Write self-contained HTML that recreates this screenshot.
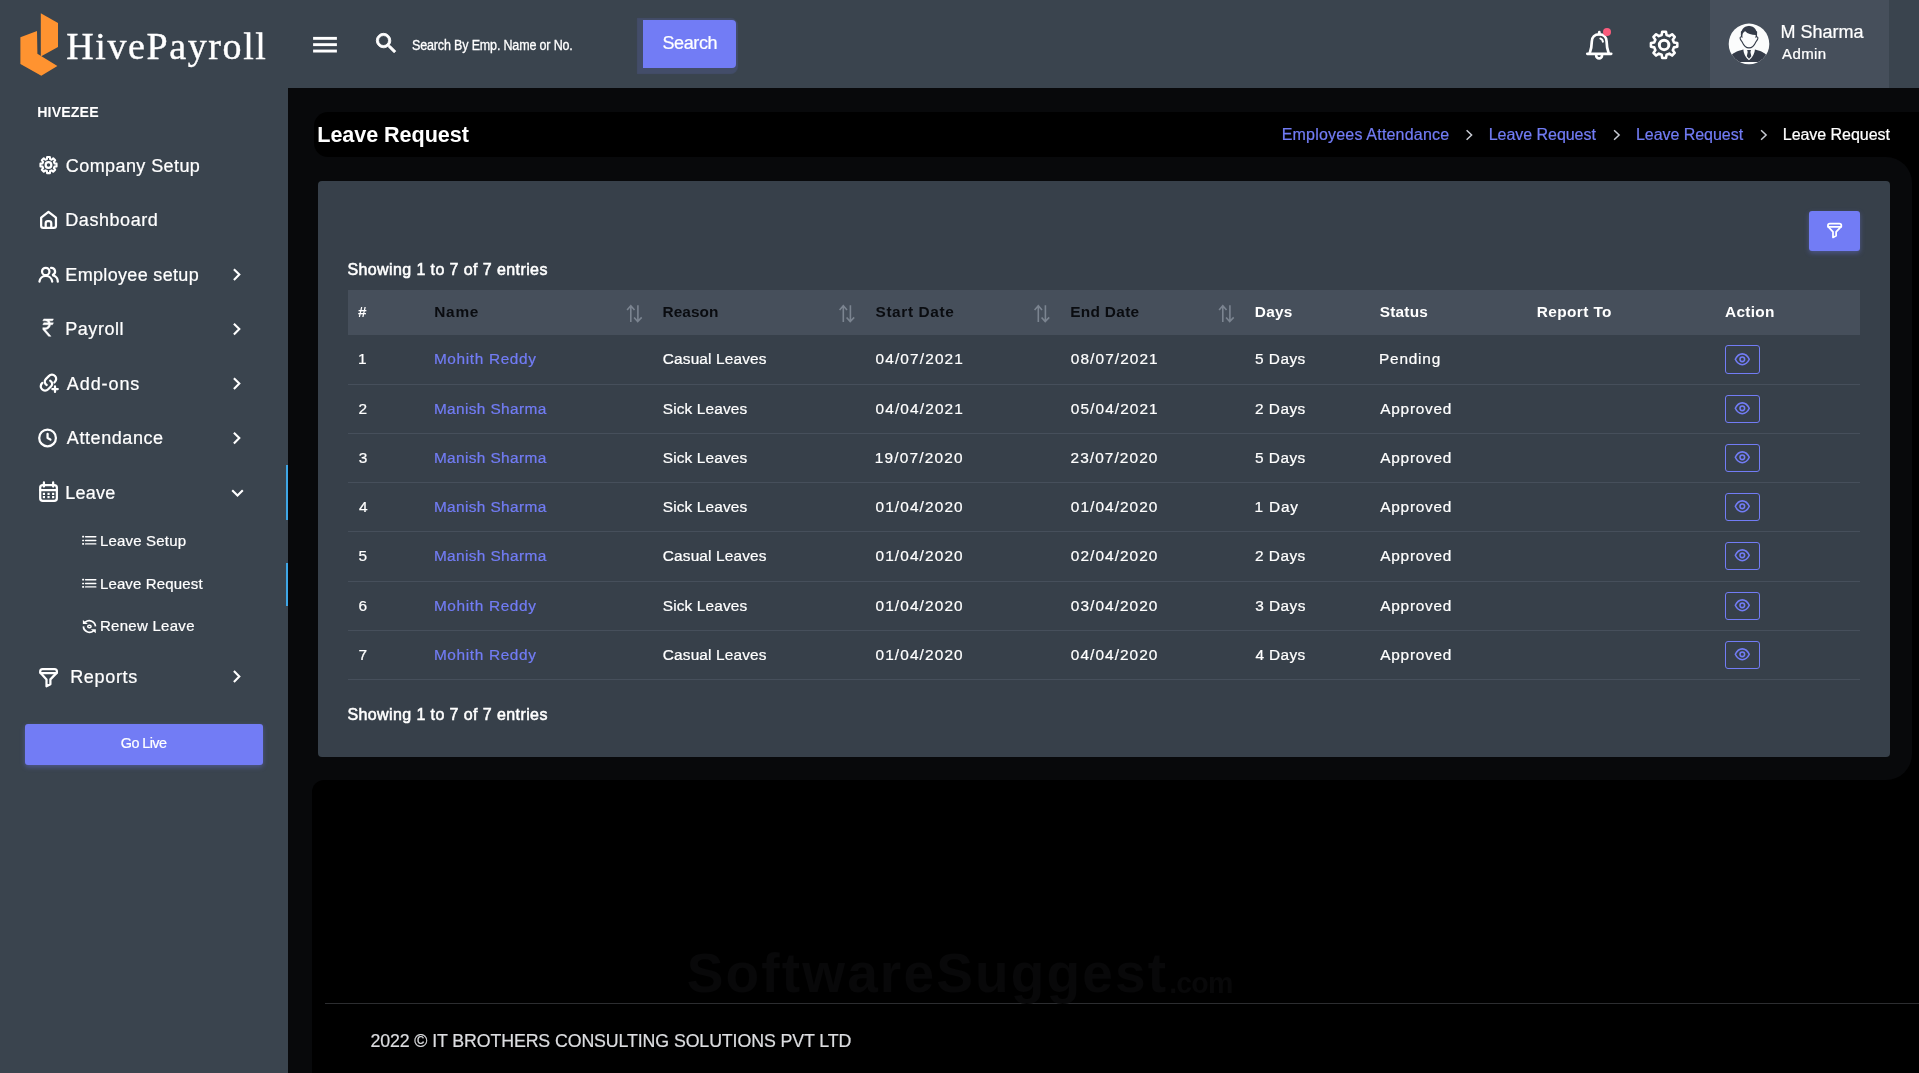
<!DOCTYPE html>
<html lang="en"><head><meta charset="utf-8"><title>HivePayroll - Leave Request</title>
<style>
*{box-sizing:border-box}
html,body{margin:0;padding:0}
body{width:1919px;height:1073px;overflow:hidden;background:#000;font-family:'Liberation Sans',sans-serif;position:relative}
#txt{position:absolute;left:0;top:0;width:1919px;height:1073px;will-change:transform}
.a{position:absolute}
.t{position:absolute;white-space:pre;line-height:1;font-weight:400}
.r{-webkit-text-stroke:0.22px currentColor}
#side{left:0;top:0;width:288px;height:1073px;background:#3a444e}
#top{left:288px;top:0;width:1631px;height:88px;background:#3a444e}
#user{left:1710px;top:0;width:179px;height:88px;background:#464f5b}
.hz{position:absolute;background:#08090b}
#strip{left:314px;top:112px;width:30px;height:45px;background:#000;border-radius:14px 0 0 14px}
#blk{left:312px;top:780px;width:40px;height:40px;background:#000;border-radius:12px 0 0 0}
#card{left:318px;top:181px;width:1572px;height:576px;background:#37404a;border-radius:4px}
#thead{left:348px;top:290px;width:1512px;height:45px;background:#464f5b}
.hl{position:absolute;left:348px;width:1512px;height:1px;background:#464f5b}
.btn{position:absolute;background:#727cf5;border-radius:3px;box-shadow:0 2px 5px 0 rgba(114,124,245,.38)}
.eye{position:absolute;left:1725px;width:35px;height:29px;border:1px solid #727cf5;border-radius:3px}
.bar{position:absolute;left:286px;width:2px;background:#3ea6e6}
svg{position:absolute;overflow:visible}
</style></head>
<body>
<div id="side" class="a"></div><div id="top" class="a"></div><div id="user" class="a"></div>
<div class="hz" style="left:288px;top:88px;width:1631px;height:24px"></div><div class="hz" style="left:288px;top:88px;width:24px;height:985px"></div><div class="hz" style="left:312px;top:112px;width:18px;height:45px"></div><div class="hz" style="left:312px;top:780px;width:14px;height:14px"></div><div class="hz" style="left:288px;top:157px;width:1624px;height:623px;border-radius:0 26px 26px 0"></div>
<div id="strip" class="a"></div><div id="blk" class="a"></div>
<div id="card" class="a"></div><div id="thead" class="a"></div>
<div class="hl" style="top:384px"></div>
<div class="hl" style="top:433px"></div>
<div class="hl" style="top:482px"></div>
<div class="hl" style="top:531px"></div>
<div class="hl" style="top:581px"></div>
<div class="hl" style="top:630px"></div>
<div class="hl" style="top:679px"></div>
<div class="a" style="left:325px;top:1003px;width:1594px;height:1px;background:#2c2d30"></div>
<div class="btn" style="left:643px;top:20px;width:93px;height:48px;border-radius:0 4px 4px 0;box-shadow:-1.6px 2.4px 1px 3.5px rgba(114,124,245,.17)"></div>
<div class="btn" style="left:25px;top:724px;width:238px;height:41px"></div>
<div class="btn" style="left:1809px;top:211px;width:51px;height:40px"></div>
<div class="bar" style="top:465px;height:55px"></div><div class="bar" style="top:563px;height:43px"></div>
<div class="eye" style="top:345px;height:29px"></div>
<svg style="left:1733.30px;top:349.75px" width="18.60" height="18.60" viewBox="0 0 24 24"><path fill="#727cf5" d="M21.92,11.6C19.9,6.91,16.1,4,12,4S4.1,6.91,2.08,11.6a1,1,0,0,0,0,.8C4.1,17.09,7.9,20,12,20s7.9-2.91,9.92-7.6A1,1,0,0,0,21.92,11.6ZM12,18c-3.17,0-6.17-2.29-7.9-6C5.83,8.29,8.83,6,12,6s6.17,2.29,7.9,6C18.17,15.71,15.17,18,12,18ZM12,8a4,4,0,1,0,4,4A4,4,0,0,0,12,8Zm0,6a2,2,0,1,1,2-2A2,2,0,0,1,12,14Z"/></svg>
<div class="eye" style="top:395px;height:28px"></div>
<svg style="left:1733.30px;top:399.25px" width="18.60" height="18.60" viewBox="0 0 24 24"><path fill="#727cf5" d="M21.92,11.6C19.9,6.91,16.1,4,12,4S4.1,6.91,2.08,11.6a1,1,0,0,0,0,.8C4.1,17.09,7.9,20,12,20s7.9-2.91,9.92-7.6A1,1,0,0,0,21.92,11.6ZM12,18c-3.17,0-6.17-2.29-7.9-6C5.83,8.29,8.83,6,12,6s6.17,2.29,7.9,6C18.17,15.71,15.17,18,12,18ZM12,8a4,4,0,1,0,4,4A4,4,0,0,0,12,8Zm0,6a2,2,0,1,1,2-2A2,2,0,0,1,12,14Z"/></svg>
<div class="eye" style="top:444px;height:28px"></div>
<svg style="left:1733.30px;top:448.25px" width="18.60" height="18.60" viewBox="0 0 24 24"><path fill="#727cf5" d="M21.92,11.6C19.9,6.91,16.1,4,12,4S4.1,6.91,2.08,11.6a1,1,0,0,0,0,.8C4.1,17.09,7.9,20,12,20s7.9-2.91,9.92-7.6A1,1,0,0,0,21.92,11.6ZM12,18c-3.17,0-6.17-2.29-7.9-6C5.83,8.29,8.83,6,12,6s6.17,2.29,7.9,6C18.17,15.71,15.17,18,12,18ZM12,8a4,4,0,1,0,4,4A4,4,0,0,0,12,8Zm0,6a2,2,0,1,1,2-2A2,2,0,0,1,12,14Z"/></svg>
<div class="eye" style="top:493px;height:28px"></div>
<svg style="left:1733.30px;top:497.25px" width="18.60" height="18.60" viewBox="0 0 24 24"><path fill="#727cf5" d="M21.92,11.6C19.9,6.91,16.1,4,12,4S4.1,6.91,2.08,11.6a1,1,0,0,0,0,.8C4.1,17.09,7.9,20,12,20s7.9-2.91,9.92-7.6A1,1,0,0,0,21.92,11.6ZM12,18c-3.17,0-6.17-2.29-7.9-6C5.83,8.29,8.83,6,12,6s6.17,2.29,7.9,6C18.17,15.71,15.17,18,12,18ZM12,8a4,4,0,1,0,4,4A4,4,0,0,0,12,8Zm0,6a2,2,0,1,1,2-2A2,2,0,0,1,12,14Z"/></svg>
<div class="eye" style="top:542px;height:28px"></div>
<svg style="left:1733.30px;top:546.25px" width="18.60" height="18.60" viewBox="0 0 24 24"><path fill="#727cf5" d="M21.92,11.6C19.9,6.91,16.1,4,12,4S4.1,6.91,2.08,11.6a1,1,0,0,0,0,.8C4.1,17.09,7.9,20,12,20s7.9-2.91,9.92-7.6A1,1,0,0,0,21.92,11.6ZM12,18c-3.17,0-6.17-2.29-7.9-6C5.83,8.29,8.83,6,12,6s6.17,2.29,7.9,6C18.17,15.71,15.17,18,12,18ZM12,8a4,4,0,1,0,4,4A4,4,0,0,0,12,8Zm0,6a2,2,0,1,1,2-2A2,2,0,0,1,12,14Z"/></svg>
<div class="eye" style="top:592px;height:28px"></div>
<svg style="left:1733.30px;top:596.25px" width="18.60" height="18.60" viewBox="0 0 24 24"><path fill="#727cf5" d="M21.92,11.6C19.9,6.91,16.1,4,12,4S4.1,6.91,2.08,11.6a1,1,0,0,0,0,.8C4.1,17.09,7.9,20,12,20s7.9-2.91,9.92-7.6A1,1,0,0,0,21.92,11.6ZM12,18c-3.17,0-6.17-2.29-7.9-6C5.83,8.29,8.83,6,12,6s6.17,2.29,7.9,6C18.17,15.71,15.17,18,12,18ZM12,8a4,4,0,1,0,4,4A4,4,0,0,0,12,8Zm0,6a2,2,0,1,1,2-2A2,2,0,0,1,12,14Z"/></svg>
<div class="eye" style="top:641px;height:28px"></div>
<svg style="left:1733.30px;top:645.25px" width="18.60" height="18.60" viewBox="0 0 24 24"><path fill="#727cf5" d="M21.92,11.6C19.9,6.91,16.1,4,12,4S4.1,6.91,2.08,11.6a1,1,0,0,0,0,.8C4.1,17.09,7.9,20,12,20s7.9-2.91,9.92-7.6A1,1,0,0,0,21.92,11.6ZM12,18c-3.17,0-6.17-2.29-7.9-6C5.83,8.29,8.83,6,12,6s6.17,2.29,7.9,6C18.17,15.71,15.17,18,12,18ZM12,8a4,4,0,1,0,4,4A4,4,0,0,0,12,8Zm0,6a2,2,0,1,1,2-2A2,2,0,0,1,12,14Z"/></svg>
<svg style="left:0;top:0" width="1919" height="400" viewBox="0 0 1919 400" fill="none" stroke="#7b8490" stroke-width="1.6"><path d="M630.8,322 V306 M627.1,310 L630.8,305.8 L634.5,310"/><path d="M637.9,305.2 V321 M634.1,317.4 L637.7,321.6 L641.7,317.4"/></svg>
<svg style="left:0;top:0" width="1919" height="400" viewBox="0 0 1919 400" fill="none" stroke="#7b8490" stroke-width="1.6"><path d="M843.3,322 V306 M839.6,310 L843.3,305.8 L847.0,310"/><path d="M850.4,305.2 V321 M846.6,317.4 L850.2,321.6 L854.2,317.4"/></svg>
<svg style="left:0;top:0" width="1919" height="400" viewBox="0 0 1919 400" fill="none" stroke="#7b8490" stroke-width="1.6"><path d="M1038.3,322 V306 M1034.6,310 L1038.3,305.8 L1042.0,310"/><path d="M1045.4,305.2 V321 M1041.6,317.4 L1045.2,321.6 L1049.2,317.4"/></svg>
<svg style="left:0;top:0" width="1919" height="400" viewBox="0 0 1919 400" fill="none" stroke="#7b8490" stroke-width="1.6"><path d="M1222.8,322 V306 M1219.1,310 L1222.8,305.8 L1226.5,310"/><path d="M1229.9,305.2 V321 M1226.1,317.4 L1229.7,321.6 L1233.7,317.4"/></svg>
<svg style="left:0px;top:0px" width="80" height="90" viewBox="0 0 80 90" ><polygon fill="#ff9330" points="40.8,13.3 58,22.9 58,47.1 40.8,56.5"/><polygon fill="#ff9330" points="20.4,37.2 37,30.9 37.4,53.8 57.4,66 41.3,75.7 20.4,63.9"/></svg>
<svg style="left:305px;top:25px" width="40" height="40" viewBox="0 0 40 40" ><rect x="8.1" y="11.9" width="23.8" height="2.9" fill="#fff"/><rect x="8.1" y="18.2" width="23.8" height="2.9" fill="#fff"/><rect x="8.1" y="24.6" width="23.8" height="2.9" fill="#fff"/></svg>
<svg style="left:373.15px;top:30.35px" width="26.64" height="26.64" viewBox="0 0 24 24"><path fill="#fff" stroke="#fff" stroke-width=".8" stroke-linejoin="round" d="M9.5,3A6.5,6.5 0 0,1 16,9.5C16,11.11 15.41,12.59 14.44,13.73L14.71,14H15.5L20.5,19L19,20.5L14,15.5V14.71L13.73,14.44C12.59,15.41 11.11,16 9.5,16A6.5,6.5 0 0,1 3,9.5A6.5,6.5 0 0,1 9.5,3M9.5,5C7,5 5,7 5,9.5C5,12 7,14 9.5,14C12,14 14,12 14,9.5C14,7 12,5 9.5,5Z"/></svg>
<svg style="left:1575px;top:20px" width="120" height="50" viewBox="0 0 120 50" fill="none" stroke="#fff" stroke-linecap="round" stroke-linejoin="round" stroke-width="2.7"><path d="M14.6,33.6 C16.3,29 16.8,25 16.8,21.6 C16.8,17 19.9,14.4 24.2,14.4 C28.5,14.4 31.6,17 31.6,21.6 C31.6,25 32.1,29 33.8,33.6" /><path d="M12.3,33.8 H36.2"/><path d="M24.3,12.2 V14"/><path d="M21.2,35.4 A2.9,2.9 0 0 0 27,35.4" /><path d="M25.4,18.5 A3.6,3.6 0 0 1 27.9,21.6" stroke-width="2.1"/></svg>
<div class="a" style="left:1602.9px;top:27.9px;width:8.2px;height:8.2px;border-radius:50%;background:#fa5c7c"></div>
<svg style="left:1575px;top:20px" width="120" height="50" viewBox="0 0 120 50" fill="none" stroke="#fff" stroke-linecap="round" stroke-linejoin="round" stroke-width="2.6"><path d="M86.64,15.00 L87.23,11.73 L90.97,11.73 L91.56,15.00 L94.36,16.16 L97.09,14.26 L99.74,16.91 L97.84,19.64 L99.00,22.44 L102.27,23.03 L102.27,26.77 L99.00,27.36 L97.84,30.16 L99.74,32.89 L97.09,35.54 L94.36,33.64 L91.56,34.80 L90.97,38.07 L87.23,38.07 L86.64,34.80 L83.84,33.64 L81.11,35.54 L78.46,32.89 L80.36,30.16 L79.20,27.36 L75.93,26.77 L75.93,23.03 L79.20,22.44 L80.36,19.64 L78.46,16.91 L81.11,14.26 L83.84,16.16Z"/><circle cx="89.1" cy="24.9" r="4.75" stroke-width="3"/></svg>
<svg style="left:1720px;top:15px" width="60" height="60" viewBox="0 0 60 60" ><defs><clipPath id="avc"><circle cx="29" cy="28.9" r="20.3"/></clipPath></defs><circle cx="29" cy="28.9" r="20.3" fill="#fbfcfc"/><g clip-path="url(#avc)"><path fill="#353c49" d="M11,47 V41 C13,37.6 19,35.6 23.4,34.6 C23.6,39 26,43 29,45.2 C32,43 34.6,39 34.9,34.6 C39.5,35.6 45,37.6 47,41 V47 Z"/><path fill="#353c49" d="M27.1,35 H31 L30.4,37 L31.3,41.3 L29,43.8 L26.8,41.3 L27.7,37 Z"/></g><path fill="#fbfcfc" stroke="#353c49" stroke-width="1.1" d="M21.6,21.8 C20.4,21.4 19.8,22.6 20.3,24 C20.9,25.6 21.8,26.4 22.3,27.2 C23.6,30.2 25.6,32.9 29,32.9 C32.4,32.9 34.4,30.2 35.7,27.2 C36.2,26.4 37.1,25.6 37.7,24 C38.2,22.6 37.6,21.4 36.4,21.8 L36.6,17 L29,11.5 L21.4,17 Z"/><path fill="#353c49" d="M22.6,23.2 C22,20.5 22.4,17.6 25.2,16.2 C27.6,19 31.6,19.7 35.8,19.9 L35.4,23.2 C36,22.6 36.6,22 37,21.6 C37.6,15.5 34.6,10.9 29,10.9 C23.4,10.9 20.4,15.5 21,21.6 C21.5,22 22,22.6 22.6,23.2 Z"/></svg>
<svg style="left:34px;top:150px" width="30" height="30" viewBox="0 0 30 30" fill="none" stroke="#fff" stroke-linecap="round" stroke-linejoin="round" stroke-width="2.05"><path d="M12.91,9.06 L13.09,6.97 L15.91,6.97 L16.09,9.06 L17.61,9.69 L19.22,8.34 L21.21,10.33 L19.86,11.94 L20.49,13.46 L22.58,13.64 L22.58,16.46 L20.49,16.64 L19.86,18.16 L21.21,19.77 L19.22,21.76 L17.61,20.41 L16.09,21.04 L15.91,23.13 L13.09,23.13 L12.91,21.04 L11.39,20.41 L9.78,21.76 L7.79,19.77 L9.14,18.16 L8.51,16.64 L6.42,16.46 L6.42,13.64 L8.51,13.46 L9.14,11.94 L7.79,10.33 L9.78,8.34 L11.39,9.69Z"/><circle cx="14.5" cy="15.05" r="2.85" stroke-width="2.2"/></svg>
<svg style="left:34px;top:205px" width="30" height="30" viewBox="0 0 30 30" fill="none" stroke="#fff" stroke-linecap="round" stroke-linejoin="round" stroke-width="2.25"><path d="M7.15,12.6 L14.45,6.95 L21.95,12.6 V20.7 Q21.95,22.9 19.75,22.9 H9.35 Q7.15,22.9 7.15,20.7 Z"/><path d="M11.7,22.6 V18.3 Q11.7,16.1 13.9,16.1 H15.05 Q17.25,16.1 17.25,18.3 V22.6"/></svg>
<svg style="left:34px;top:260px" width="30" height="30" viewBox="0 0 30 30" fill="none" stroke="#fff" stroke-linecap="round" stroke-linejoin="round" stroke-width="2.25"><circle cx="11.74" cy="11.46" r="3.7"/><path d="M5.45,21.7 A6.4,6.4 0 0 1 18.2,21.7"/><path d="M17.05,7.8 A3.7,3.7 0 0 1 18.9,14.85"/><path d="M19.3,15.55 A6.4,6.4 0 0 1 23.8,21.7"/></svg>
<svg style="left:36.40px;top:316.20px" width="23.28" height="23.28" viewBox="0 0 24 24"><path fill="#fff" stroke="#fff" stroke-width=".45" d="M8,3H18L17,5H13.74C14.22,5.58 14.58,6.26 14.79,7H18L17,9H15C14.75,11.57 12.74,13.63 10.2,13.96V14H9.5L15.5,21H13L7,14V12H9.5C11.26,12 12.72,10.7 12.96,9H7L8,7H12.66C12.1,5.82 10.9,5 9.5,5H7L8,3Z"/></svg>
<svg style="left:34px;top:369px" width="30" height="30" viewBox="0 0 30 30" fill="none" stroke="#fff" stroke-linecap="round" stroke-linejoin="round" stroke-width="2.25"><path d="M20.4,13.5 C22.6,11.6 22.7,8.7 21,7 C19.2,5.2 16.6,5.3 14.8,7.1 L11.8,10.1 C10,11.9 10.6,14.6 12.7,16"/><path d="M8.4,13.9 C6.2,15.8 6.3,18.6 8,20.3 C9.8,22.1 12.4,22 14.2,20.2 L17.2,17.2 C19,15.4 18.2,12.9 16.2,11.7"/><path d="M18.3,20.1 H23.8 M21,17.4 V22.9"/></svg>
<svg style="left:34px;top:423px" width="30" height="30" viewBox="0 0 30 30" fill="none" stroke="#fff" stroke-linecap="round" stroke-linejoin="round" stroke-width="2.25"><circle cx="13.56" cy="14.96" r="8.35"/><path d="M13.56,10.9 V15.1 L16.4,16.6"/></svg>
<svg style="left:34px;top:477px" width="30" height="30" viewBox="0 0 30 30" fill="none" stroke="#fff" stroke-linecap="round" stroke-linejoin="round" stroke-width="2.25"><rect x="6.2" y="8" width="16.65" height="15.85" rx="2.6"/><path d="M6.2,13 H22.85 M9.92,5.4 V9.6 M19.15,5.4 V9.6"/><rect x="8.82" y="15.80" width="2.2" height="2.2" fill="#fff" stroke="none"/><rect x="8.82" y="19.00" width="2.2" height="2.2" fill="#fff" stroke="none"/><rect x="13.44" y="15.80" width="2.2" height="2.2" fill="#fff" stroke="none"/><rect x="13.44" y="19.00" width="2.2" height="2.2" fill="#fff" stroke="none"/><rect x="18.05" y="15.80" width="2.2" height="2.2" fill="#fff" stroke="none"/><rect x="18.05" y="19.00" width="2.2" height="2.2" fill="#fff" stroke="none"/></svg>
<svg style="left:34px;top:662px" width="30" height="30" viewBox="0 0 30 30" fill="none" stroke="#fff" stroke-linecap="round" stroke-linejoin="round" stroke-width="2.25"><path d="M8.6,7 H20.5 Q22.9,7 22.9,9.4 V10.6 L16.4,17.4 V22.3 L12.5,24.3 V17.4 L6.2,10.6 V9.4 Q6.2,7 8.6,7 Z"/><path d="M6.6,11.2 H22.5"/></svg>
<svg style="left:1822.86px;top:218.08px" width="24.0" height="24.0" viewBox="0 0 30 30" fill="none" stroke="#fff" stroke-linecap="round" stroke-linejoin="round" stroke-width="2.2"><path d="M8.6,7 H20.5 Q22.9,7 22.9,9.4 V10.6 L16.4,17.4 V22.3 L12.5,24.3 V17.4 L6.2,10.6 V9.4 Q6.2,7 8.6,7 Z"/><path d="M6.6,11.2 H22.5"/></svg>
<svg style="left:78px;top:530px" width="24" height="24" viewBox="0 0 24 24" ><rect x="6.9" y="6.02" width="11.6" height="1.36" rx=".68" fill="#fff"/><rect x="4.1" y="5.85" width="2" height="1.7" rx=".5" fill="#fff"/><rect x="6.9" y="9.82" width="11.6" height="1.36" rx=".68" fill="#fff"/><rect x="4.1" y="9.65" width="2" height="1.7" rx=".5" fill="#fff"/><rect x="6.9" y="13.22" width="11.6" height="1.36" rx=".68" fill="#fff"/><rect x="4.1" y="13.05" width="2" height="1.7" rx=".5" fill="#fff"/></svg>
<svg style="left:78px;top:573.1px" width="24" height="24" viewBox="0 0 24 24" ><rect x="6.9" y="6.02" width="11.6" height="1.36" rx=".68" fill="#fff"/><rect x="4.1" y="5.85" width="2" height="1.7" rx=".5" fill="#fff"/><rect x="6.9" y="9.82" width="11.6" height="1.36" rx=".68" fill="#fff"/><rect x="4.1" y="9.65" width="2" height="1.7" rx=".5" fill="#fff"/><rect x="6.9" y="13.22" width="11.6" height="1.36" rx=".68" fill="#fff"/><rect x="4.1" y="13.05" width="2" height="1.7" rx=".5" fill="#fff"/></svg>
<svg style="left:78px;top:615px" width="24" height="24" viewBox="0 0 24 24" ><path d="M17.5,11.4 A6.2,6.2 0 0 0 7.3,7.2" fill="none" stroke="#fff" stroke-width="1.7"/><path d="M5.4,11.4 A6.2,6.2 0 0 0 15.5,15.9" fill="none" stroke="#fff" stroke-width="1.7"/><path d="M4.9,5 V8.9 H9.9 Z" fill="#fff"/><path d="M17.8,18.3 V14.3 H12.8 Z" fill="#fff"/><ellipse cx="11.4" cy="11.6" rx="1.7" ry="1.25" fill="none" stroke="#fff" stroke-width="1.5"/></svg>
<svg style="left:0;top:0" width="288" height="700" viewBox="0 0 288 700" fill="none" stroke="#fff" stroke-width="2.1"><path d="M233.9,269.2 L239.3,274.6 L233.9,280.0"/></svg>
<svg style="left:0;top:0" width="288" height="700" viewBox="0 0 288 700" fill="none" stroke="#fff" stroke-width="2.1"><path d="M233.9,323.7 L239.3,329.1 L233.9,334.5"/></svg>
<svg style="left:0;top:0" width="288" height="700" viewBox="0 0 288 700" fill="none" stroke="#fff" stroke-width="2.1"><path d="M233.9,378.2 L239.3,383.6 L233.9,389.0"/></svg>
<svg style="left:0;top:0" width="288" height="700" viewBox="0 0 288 700" fill="none" stroke="#fff" stroke-width="2.1"><path d="M233.9,432.7 L239.3,438.1 L233.9,443.5"/></svg>
<svg style="left:0;top:0" width="288" height="700" viewBox="0 0 288 700" fill="none" stroke="#fff" stroke-width="2.1"><path d="M233.9,671.1 L239.3,676.5 L233.9,681.9"/></svg>
<svg style="left:0;top:0" width="288" height="700" viewBox="0 0 288 700" fill="none" stroke="#fff" stroke-width="2.1"><path d="M232.2,490.2 L237.5,495.6 L242.8,490.2"/></svg>
<svg style="left:0;top:0" width="1919" height="200" viewBox="0 0 1919 200" fill="none" stroke="#c9ccd4" stroke-width="1.5"><path d="M1466.6,130.3 L1471.6,135 L1466.6,139.7"/></svg>
<svg style="left:0;top:0" width="1919" height="200" viewBox="0 0 1919 200" fill="none" stroke="#c9ccd4" stroke-width="1.5"><path d="M1614.1,130.3 L1619.1,135 L1614.1,139.7"/></svg>
<svg style="left:0;top:0" width="1919" height="200" viewBox="0 0 1919 200" fill="none" stroke="#c9ccd4" stroke-width="1.5"><path d="M1761.1,130.3 L1766.1,135 L1761.1,139.7"/></svg>
<div id="txt">
<span class="t" style="left:66.3px;top:26.7px;font-size:38px;color:#fff;font-family:'Liberation Serif', serif;letter-spacing:1.6px;-webkit-text-stroke:0.4px #fff;">HivePayroll</span>
<span class="t" style="left:412.4px;top:38.1px;font-size:14px;color:#fff;letter-spacing:-0.2px;-webkit-text-stroke:0.3px #fff;transform:scaleX(0.8958);transform-origin:0.75px 50%;">Search By Emp. Name or No.</span>
<span class="t r" style="left:662.5px;top:34.0px;font-size:18px;color:#fff;letter-spacing:-0.39px;">Search</span>
<span class="t r" style="left:1780.6px;top:22.7px;font-size:18px;color:#fff;">M Sharma</span>
<span class="t r" style="left:1782.1px;top:46.1px;font-size:15px;color:#fff;letter-spacing:0.375px;">Admin</span>
<span class="t" style="left:37.2px;top:104.9px;font-size:14.2px;color:#fff;font-weight:700;letter-spacing:0.125px;">HIVEZEE</span>
<span class="t r" style="left:65.8px;top:156.6px;font-size:18px;color:#fff;letter-spacing:0.412px;">Company Setup</span>
<span class="t r" style="left:65.3px;top:210.8px;font-size:18px;color:#fff;letter-spacing:0.55px;">Dashboard</span>
<span class="t r" style="left:65.3px;top:265.7px;font-size:18px;color:#fff;letter-spacing:0.335px;">Employee setup</span>
<span class="t r" style="left:65.3px;top:319.5px;font-size:18px;color:#fff;letter-spacing:0.525px;">Payroll</span>
<span class="t r" style="left:66.8px;top:374.5px;font-size:18px;color:#fff;letter-spacing:0.917px;">Add-ons</span>
<span class="t r" style="left:66.8px;top:428.7px;font-size:18px;color:#fff;letter-spacing:0.583px;">Attendance</span>
<span class="t r" style="left:65.3px;top:483.5px;font-size:18px;color:#fff;letter-spacing:0.238px;">Leave</span>
<span class="t r" style="left:70.2px;top:667.7px;font-size:18px;color:#fff;letter-spacing:0.667px;">Reports</span>
<span class="t r" style="left:99.9px;top:532.8px;font-size:15px;color:#fff;letter-spacing:0.195px;">Leave Setup</span>
<span class="t r" style="left:99.9px;top:575.9px;font-size:15px;color:#fff;letter-spacing:0.15px;">Leave Request</span>
<span class="t r" style="left:99.9px;top:618.4px;font-size:15px;color:#fff;letter-spacing:0.285px;">Renew Leave</span>
<span class="t r" style="left:120.8px;top:736.3px;font-size:14.4px;color:#fff;letter-spacing:-0.575px;">Go Live</span>
<span class="t" style="left:317.3px;top:123.5px;font-size:21.6px;color:#fff;font-weight:700;letter-spacing:-0.071px;">Leave Request</span>
<span class="t r" style="left:1281.7px;top:126.5px;font-size:16px;color:#727cf5;letter-spacing:0.197px;">Employees Attendance</span>
<span class="t r" style="left:1488.7px;top:126.5px;font-size:16px;color:#727cf5;letter-spacing:-0.038px;">Leave Request</span>
<span class="t r" style="left:1636.0px;top:126.5px;font-size:16px;color:#727cf5;letter-spacing:-0.046px;">Leave Request</span>
<span class="t r" style="left:1782.8px;top:126.5px;font-size:16px;color:#fff;letter-spacing:-0.046px;">Leave Request</span>
<span class="t" style="left:347.4px;top:261.6px;font-size:16px;color:#fff;letter-spacing:0.406px;-webkit-text-stroke:0.55px #fff;">Showing 1 to 7 of 7 entries</span>
<span class="t" style="left:347.4px;top:706.8px;font-size:16px;color:#fff;letter-spacing:0.406px;-webkit-text-stroke:0.55px #fff;">Showing 1 to 7 of 7 entries</span>
<span class="t" style="left:358.1px;top:304.2px;font-size:15.4px;color:#fff;font-weight:700;">#</span>
<span class="t" style="left:434.2px;top:304.2px;font-size:15.4px;color:#0a0c10;font-weight:700;letter-spacing:0.767px;">Name</span>
<span class="t" style="left:662.5px;top:304.2px;font-size:15.4px;color:#0a0c10;font-weight:700;letter-spacing:0.05px;">Reason</span>
<span class="t" style="left:875.5px;top:304.2px;font-size:15.4px;color:#0a0c10;font-weight:700;letter-spacing:0.617px;">Start Date</span>
<span class="t" style="left:1070.3px;top:304.2px;font-size:15.4px;color:#0a0c10;font-weight:700;letter-spacing:0.307px;">End Date</span>
<span class="t" style="left:1254.8px;top:304.2px;font-size:15.4px;color:#fff;font-weight:700;letter-spacing:0.25px;">Days</span>
<span class="t" style="left:1379.8px;top:304.2px;font-size:15.4px;color:#fff;font-weight:700;letter-spacing:0.2px;">Status</span>
<span class="t" style="left:1536.7px;top:304.2px;font-size:15.4px;color:#fff;font-weight:700;letter-spacing:0.412px;">Report To</span>
<span class="t" style="left:1725.1px;top:304.2px;font-size:15.4px;color:#fff;font-weight:700;letter-spacing:0.28px;">Action</span>
<span class="t r" style="left:357.9px;top:351.3px;font-size:15.4px;color:#fff;">1</span>
<span class="t r" style="left:433.9px;top:351.3px;font-size:15.4px;color:#727cf5;letter-spacing:0.645px;">Mohith Reddy</span>
<span class="t r" style="left:662.8px;top:351.3px;font-size:15.4px;color:#fff;letter-spacing:0.158px;">Casual Leaves</span>
<span class="t r" style="left:875.5px;top:351.3px;font-size:15.4px;color:#fff;letter-spacing:1.15px;">04/07/2021</span>
<span class="t r" style="left:1070.8px;top:351.3px;font-size:15.4px;color:#fff;letter-spacing:1.094px;">08/07/2021</span>
<span class="t r" style="left:1255.0px;top:351.3px;font-size:15.4px;color:#fff;letter-spacing:0.48px;">5 Days</span>
<span class="t r" style="left:1379.0px;top:351.3px;font-size:15.4px;color:#fff;letter-spacing:0.792px;">Pending</span>
<span class="t r" style="left:358.4px;top:400.7px;font-size:15.4px;color:#fff;">2</span>
<span class="t r" style="left:433.9px;top:400.7px;font-size:15.4px;color:#727cf5;letter-spacing:0.383px;">Manish Sharma</span>
<span class="t r" style="left:662.8px;top:400.7px;font-size:15.4px;color:#fff;letter-spacing:0.145px;">Sick Leaves</span>
<span class="t r" style="left:875.5px;top:400.7px;font-size:15.4px;color:#fff;letter-spacing:1.15px;">04/04/2021</span>
<span class="t r" style="left:1070.8px;top:400.7px;font-size:15.4px;color:#fff;letter-spacing:1.094px;">05/04/2021</span>
<span class="t r" style="left:1255.0px;top:400.7px;font-size:15.4px;color:#fff;letter-spacing:0.48px;">2 Days</span>
<span class="t r" style="left:1380.3px;top:400.7px;font-size:15.4px;color:#fff;letter-spacing:0.743px;">Approved</span>
<span class="t r" style="left:358.7px;top:449.8px;font-size:15.4px;color:#fff;">3</span>
<span class="t r" style="left:433.9px;top:449.8px;font-size:15.4px;color:#727cf5;letter-spacing:0.383px;">Manish Sharma</span>
<span class="t r" style="left:662.8px;top:449.8px;font-size:15.4px;color:#fff;letter-spacing:0.145px;">Sick Leaves</span>
<span class="t r" style="left:874.8px;top:449.8px;font-size:15.4px;color:#fff;letter-spacing:1.206px;">19/07/2020</span>
<span class="t r" style="left:1070.5px;top:449.8px;font-size:15.4px;color:#fff;letter-spacing:1.094px;">23/07/2020</span>
<span class="t r" style="left:1255.0px;top:449.8px;font-size:15.4px;color:#fff;letter-spacing:0.48px;">5 Days</span>
<span class="t r" style="left:1380.3px;top:449.8px;font-size:15.4px;color:#fff;letter-spacing:0.743px;">Approved</span>
<span class="t r" style="left:358.9px;top:498.7px;font-size:15.4px;color:#fff;">4</span>
<span class="t r" style="left:433.9px;top:498.7px;font-size:15.4px;color:#727cf5;letter-spacing:0.383px;">Manish Sharma</span>
<span class="t r" style="left:662.8px;top:498.7px;font-size:15.4px;color:#fff;letter-spacing:0.145px;">Sick Leaves</span>
<span class="t r" style="left:875.5px;top:498.7px;font-size:15.4px;color:#fff;letter-spacing:1.122px;">01/04/2020</span>
<span class="t r" style="left:1070.8px;top:498.7px;font-size:15.4px;color:#fff;letter-spacing:1.067px;">01/04/2020</span>
<span class="t r" style="left:1254.5px;top:498.7px;font-size:15.4px;color:#fff;letter-spacing:0.812px;">1 Day</span>
<span class="t r" style="left:1380.3px;top:498.7px;font-size:15.4px;color:#fff;letter-spacing:0.743px;">Approved</span>
<span class="t r" style="left:358.4px;top:548.2px;font-size:15.4px;color:#fff;">5</span>
<span class="t r" style="left:433.9px;top:548.2px;font-size:15.4px;color:#727cf5;letter-spacing:0.383px;">Manish Sharma</span>
<span class="t r" style="left:662.8px;top:548.2px;font-size:15.4px;color:#fff;letter-spacing:0.158px;">Casual Leaves</span>
<span class="t r" style="left:875.5px;top:548.2px;font-size:15.4px;color:#fff;letter-spacing:1.122px;">01/04/2020</span>
<span class="t r" style="left:1070.8px;top:548.2px;font-size:15.4px;color:#fff;letter-spacing:1.067px;">02/04/2020</span>
<span class="t r" style="left:1255.0px;top:548.2px;font-size:15.4px;color:#fff;letter-spacing:0.48px;">2 Days</span>
<span class="t r" style="left:1380.3px;top:548.2px;font-size:15.4px;color:#fff;letter-spacing:0.743px;">Approved</span>
<span class="t r" style="left:358.4px;top:597.6px;font-size:15.4px;color:#fff;">6</span>
<span class="t r" style="left:433.9px;top:597.6px;font-size:15.4px;color:#727cf5;letter-spacing:0.645px;">Mohith Reddy</span>
<span class="t r" style="left:662.8px;top:597.6px;font-size:15.4px;color:#fff;letter-spacing:0.145px;">Sick Leaves</span>
<span class="t r" style="left:875.5px;top:597.6px;font-size:15.4px;color:#fff;letter-spacing:1.122px;">01/04/2020</span>
<span class="t r" style="left:1070.8px;top:597.6px;font-size:15.4px;color:#fff;letter-spacing:1.067px;">03/04/2020</span>
<span class="t r" style="left:1255.3px;top:597.6px;font-size:15.4px;color:#fff;letter-spacing:0.43px;">3 Days</span>
<span class="t r" style="left:1380.3px;top:597.6px;font-size:15.4px;color:#fff;letter-spacing:0.743px;">Approved</span>
<span class="t r" style="left:358.4px;top:646.7px;font-size:15.4px;color:#fff;">7</span>
<span class="t r" style="left:433.9px;top:646.7px;font-size:15.4px;color:#727cf5;letter-spacing:0.645px;">Mohith Reddy</span>
<span class="t r" style="left:662.8px;top:646.7px;font-size:15.4px;color:#fff;letter-spacing:0.158px;">Casual Leaves</span>
<span class="t r" style="left:875.5px;top:646.7px;font-size:15.4px;color:#fff;letter-spacing:1.122px;">01/04/2020</span>
<span class="t r" style="left:1070.8px;top:646.7px;font-size:15.4px;color:#fff;letter-spacing:1.067px;">04/04/2020</span>
<span class="t r" style="left:1255.5px;top:646.7px;font-size:15.4px;color:#fff;letter-spacing:0.38px;">4 Days</span>
<span class="t r" style="left:1380.3px;top:646.7px;font-size:15.4px;color:#fff;letter-spacing:0.743px;">Approved</span>
<span class="t r" style="left:370.4px;top:1033.2px;font-size:17.8px;color:#dcdde0;letter-spacing:-0.113px;">2022 © IT BROTHERS CONSULTING SOLUTIONS PVT LTD</span>
<span class="t" style="left:686.7px;top:946.1px;font-size:55px;color:#080809;font-weight:700;letter-spacing:2.15px;">SoftwareSuggest</span>
<span class="t" style="left:1169.2px;top:968.6px;font-size:28.6px;color:#080809;font-weight:700;letter-spacing:-0.833px;">.com</span>
</div>
</body></html>
